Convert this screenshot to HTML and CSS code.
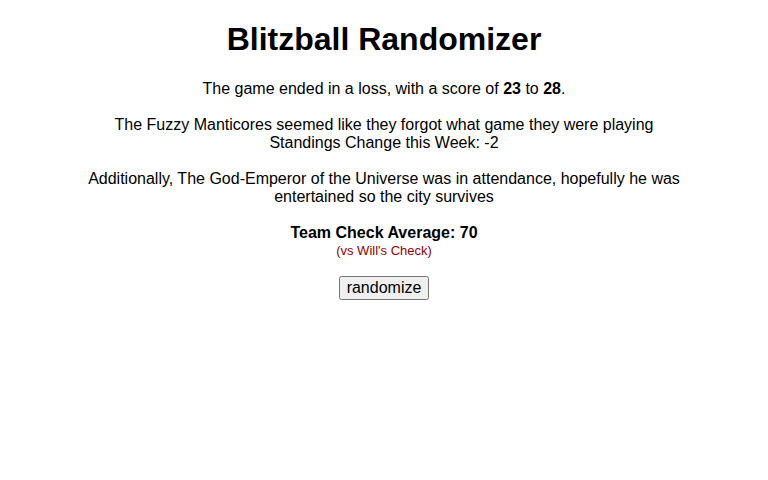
FILE: index.html
```html
<html><head>
<meta charset="UTF-8">
<meta name="viewport" content="width=device-width, initial-scale=1.0">
<title>Blitzball Randomizer</title>
<link rel="stylesheet" href="styles.css">
</head>
<body>
  <h1>Blitzball Randomizer</h1>

  <div class="results">
    <p>The game ended in a loss, with a score of <strong>23</strong> to <strong>28</strong>.</p>
    <p>The Fuzzy Manticores seemed like they forgot what game they were playing<br>Standings Change this Week: -2</p>
    <p>Additionally, The God-Emperor of the Universe was in attendance, hopefully he was entertained so the city survives</p>
    <p class="check">
      <strong>Team Check Average: 70</strong>
      <span class="versus">(vs Will's Check)</span>
    </p>
  </div>

  <button class="randomize">randomize</button>
</body>
</html>
```

FILE: styles.css
```css
body {
  font-family: "Liberation Sans", Arial, sans-serif;
  color: #000;
  background-color: #fff;
  margin: 0;
  padding: 0 80px;
  text-align: center;
}
h1 {
  font-size: 32px;
  margin: 21px 0 22px;
}
.results p {
  font-size: 16px;
  line-height: 18px;
  margin: 0 0 18px;
}
.results .check {
  margin-bottom: 16px;
}
.check strong {
  display: block;
}
.versus {
  display: block;
  font-size: 13px;
  line-height: 18px;
  color: #8b0000;
}
.randomize {
  font-family: "Liberation Sans", Arial, sans-serif;
  font-size: 16px;
  margin-top: 0;
}
```
